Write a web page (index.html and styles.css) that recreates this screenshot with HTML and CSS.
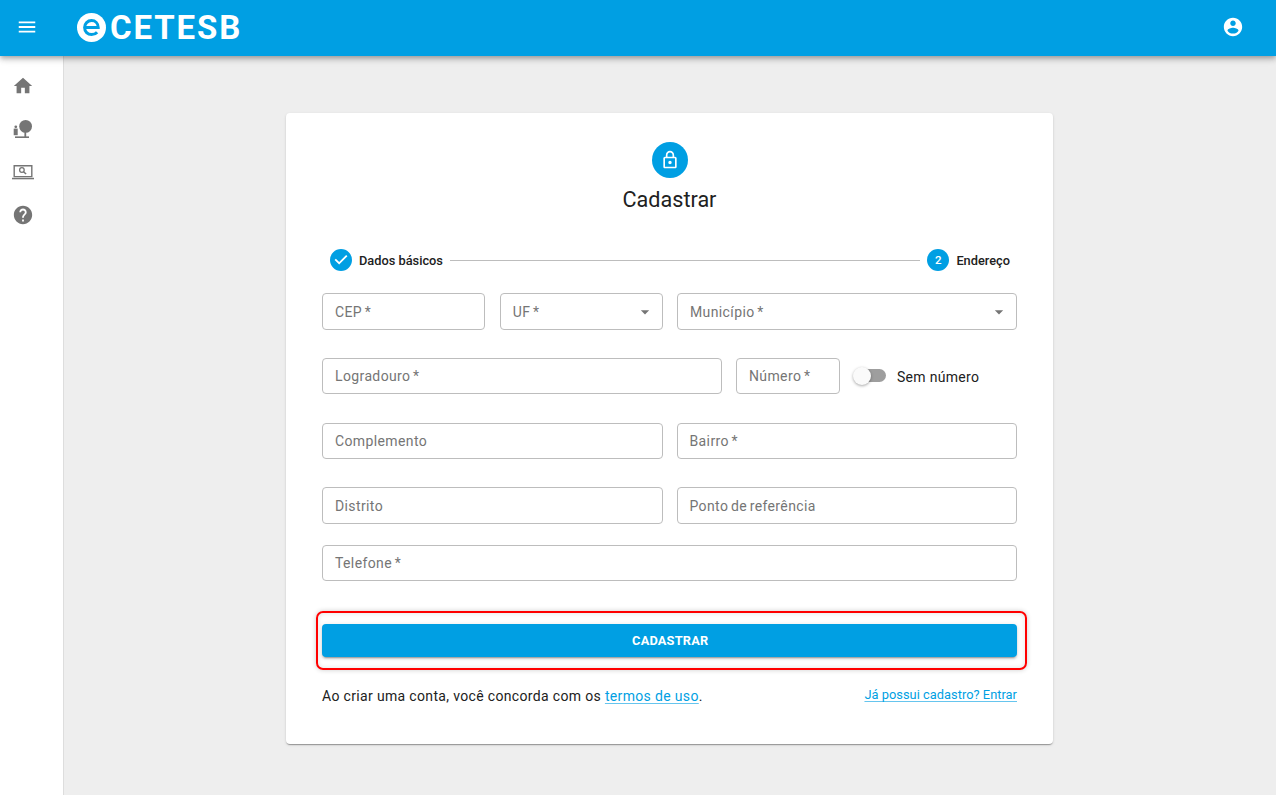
FILE: index.html
```html
<!DOCTYPE html>
<html lang="pt-BR">
<head>
<meta charset="utf-8">
<title>CETESB - Cadastrar</title>
<link rel="stylesheet" href="styles.css">
</head>
<body>
<div class="app">
  <header class="topbar">
    <svg class="menu-icon" viewBox="0 0 24 24"><path d="M3 18h18v-2H3v2zm0-5h18v-2H3v2zm0-7v2h18V6H3z"/></svg>
    <div class="logo">
      <svg class="logo-mark" viewBox="0 0 29 29"><circle cx="14.5" cy="14.5" r="14.5" fill="#fff"/><path d="M7.6 14.6h13.6c0-4.2-2.9-7-6.7-7-3.9 0-6.9 3-6.9 7s3 7 7 7c2.3 0 4.2-.9 5.5-2.4" fill="none" stroke="#009fe3" stroke-width="3"/></svg>
      <span class="logo-text">CETESB</span>
    </div>
    <svg class="account-icon" viewBox="0 0 24 24"><path d="M12 2C6.48 2 2 6.48 2 12s4.48 10 10 10 10-4.48 10-10S17.52 2 12 2zm0 3c1.66 0 3 1.34 3 3s-1.34 3-3 3-3-1.34-3-3 1.34-3 3-3zm0 14.2c-2.5 0-4.71-1.28-6-3.22.03-1.99 4-3.08 6-3.08 1.99 0 5.97 1.09 6 3.08-1.29 1.94-3.5 3.22-6 3.22z"/></svg>
  </header>
  <div class="body">
    <nav class="sidebar">
      <div class="nav-item"><svg class="nav-icon" viewBox="0 0 24 24"><path d="M10 20v-6h4v6h5v-8h3L12 3 2 12h3v8z"/></svg></div>
      <div class="nav-item"><svg class="nav-icon" viewBox="0 0 22 22"><circle cx="13.6" cy="8.4" r="6.4"/><rect x="12.4" y="13" width="1.8" height="6"/><rect x="3" y="18.4" width="14" height="1.6"/><circle cx="3.8" cy="8.8" r="1.4"/><rect x="1.7" y="10.6" width="4" height="6.6"/></svg></div>
      <div class="nav-item"><svg class="nav-icon" viewBox="0 0 22 22"><path d="M1.5 4h19v12.300h-19zM2.900 5.400v9.500h16.200V5.400z" fill-rule="evenodd"/><rect x="0" y="16.800" width="22" height="1.500"/><circle cx="9.900" cy="9" r="2.300" fill="none" stroke="#757575" stroke-width="1.300"/><path d="M11.500 10.700l2.600 2.300" fill="none" stroke="#757575" stroke-width="1.500"/></svg></div>
      <div class="nav-item"><svg class="nav-icon" viewBox="0 0 24 24"><path d="M12 2C6.48 2 2 6.48 2 12s4.480 10 10 10 10-4.480 10-10S17.520 2 12 2zm1 17h-2v-2h2v2zm2.070-7.750l-.9.920C13.450 12.900 13 13.500 13 15h-2v-.5c0-1.100.450-2.100 1.170-2.830l1.240-1.260c.370-.360.590-.860.590-1.410 0-1.100-.9-2-2-2s-2 .9-2 2H8c0-2.210 1.790-4 4-4s4 1.790 4 4c0 .880-.360 1.680-.930 2.250z"/></svg></div>
    </nav>
    <main class="main">
      <section class="card">
        <div class="avatar">
          <svg class="lock-icon" viewBox="0 0 24 24"><path d="M18 8h-1V6c0-2.760-2.240-5-5-5S7 3.240 7 6v2H6c-1.100 0-2 .9-2 2v10c0 1.100.9 2 2 2h12c1.100 0 2-.9 2-2V10c0-1.100-.9-2-2-2zM9 6c0-1.660 1.340-3 3-3s3 1.340 3 3v2H9V6zm9 14H6V10h12v10zm-6-3c1.100 0 2-.9 2-2s-.9-2-2-2-2 .9-2 2 .9 2 2 2z"/></svg>
        </div>
        <h1 class="title">Cadastrar</h1>
        <div class="stepper">
          <svg class="step-icon" viewBox="0 0 24 24"><path d="M12 0a12 12 0 1 0 0 24 12 12 0 0 0 0-24zm-2 17l-5-5 1.400-1.400 3.600 3.600 7.600-7.600L19 8l-9 9z"/></svg>
          <span class="step-label">Dados básicos</span>
          <span class="step-line"></span>
          <span class="step-number">2</span>
          <span class="step-label">Endereço</span>
        </div>
        <div class="row row-first">
          <div class="field w-third">CEP *</div>
          <div class="field w-third select">UF *<svg class="arrow" viewBox="0 0 24 24"><path d="M7 10l5 5 5-5z"/></svg></div>
          <div class="field w-half select">Município *<svg class="arrow" viewBox="0 0 24 24"><path d="M7 10l5 5 5-5z"/></svg></div>
        </div>
        <div class="row">
          <div class="field w-street">Logradouro *</div>
          <div class="field w-number">Número *</div>
          <div class="switch"><span class="switch-track"></span><span class="switch-label">Sem número</span></div>
        </div>
        <div class="row row-third">
          <div class="field w-half">Complemento</div>
          <div class="field w-half">Bairro *</div>
        </div>
        <div class="row row-fourth">
          <div class="field w-half">Distrito</div>
          <div class="field w-half">Ponto de referência</div>
        </div>
        <div class="row row-phone">
          <div class="field w-full">Telefone *</div>
        </div>
        <div class="submit-wrap">
          <button class="submit" type="button">CADASTRAR</button>
          <span class="highlight"></span>
        </div>
        <div class="card-footer">
          <p class="terms">Ao criar uma conta, você concorda com os <a class="link" href="#">termos de uso</a>.</p>
          <a class="link login" href="#">Já possui cadastro? Entrar</a>
        </div>
      </section>
    </main>
  </div>
</div>
</body>
</html>
```
FILE: styles.css
```css
* { box-sizing: border-box; }
html, body { margin: 0; height: 100%; }
body { font-family: Roboto, "Liberation Sans", sans-serif; color: #212121; background: #eee; overflow: hidden; }
.app { display: flex; flex-direction: column; height: 100vh; }

.topbar { position: relative; z-index: 2; flex: none; height: 56px; background: #009fe3; display: flex; align-items: center; padding: 0 32px 2px 16px; box-shadow: 0 2px 4px -1px rgba(0,0,0,.2), 0 4px 5px rgba(0,0,0,.14), 0 1px 10px rgba(0,0,0,.12); }
.menu-icon { width: 22px; height: 22px; fill: #fff; flex: none; }
.logo { display: flex; align-items: center; margin-left: 39px; color: #fff; }
.logo-mark { width: 29px; height: 29px; flex: none; }
.logo-text { font-size: 33px; font-weight: 700; line-height: 29px; margin-left: 4px; letter-spacing: 1.9px; }
.account-icon { width: 22px; height: 22px; fill: #fff; margin-left: auto; flex: none; }

.body { flex: 1; display: flex; min-height: 0; }
.sidebar { flex: none; width: 64px; background: #fff; border-right: 1px solid #ddd; padding: 8.5px 17px 0 0; }
.nav-item { height: 43px; display: flex; align-items: center; justify-content: center; }
.nav-icon { width: 22px; height: 22px; fill: #757575; }

.main { flex: 1; display: flex; justify-content: center; align-items: flex-start; padding: 57px 1px 0 0; }
.card { width: 767px; height: 631px; background: #fff; border-radius: 4px; padding: 29px 36px 0; box-shadow: 0 2px 1px -1px rgba(0,0,0,.2), 0 1px 1px rgba(0,0,0,.14), 0 1px 3px rgba(0,0,0,.12); }
.avatar { width: 36px; height: 36px; margin: 0 auto; border-radius: 50%; background: #009fe3; display: flex; align-items: center; justify-content: center; }
.lock-icon { width: 20px; height: 20px; fill: #fff; }
.title { margin: 7px 0 0; font-size: 21.6px; font-weight: 400; line-height: 30px; text-align: center; color: #212121; }

.stepper { display: flex; align-items: center; height: 22px; margin-top: 34px; padding: 0 7px 0 8px; }
.step-icon { width: 22px; height: 22px; fill: #009fe3; flex: none; }
.step-number { width: 22px; height: 22px; flex: none; border-radius: 50%; background: #009fe3; color: #fff; font-size: 11.5px; font-weight: 500; line-height: 22px; text-align: center; }
.step-label { margin-left: 7px; padding-top: 1px; font-size: 12.8px; font-weight: 500; line-height: 22px; color: #212121; white-space: nowrap; }
.step-line { flex: 1; height: 1px; background: #bdbdbd; margin: 0 7px; }

.row { display: flex; gap: 14px; margin-top: 28px; align-items: center; }
.row-first { margin-top: 22.4px; gap: 14.5px; }
.row-third { margin-top: 28.5px; }
.row-fourth { margin-top: 27.9px; }
.row-phone { margin-top: 21.1px; }
.field { position: relative; height: 36.5px; border: 1px solid #bdbdbd; border-radius: 4px; padding: 0 12px; display: flex; align-items: center; font-size: 14px; letter-spacing: .38px; word-spacing: -1.2px; color: #757575; flex: none; }
.w-third { width: 163.25px; }
.w-half { width: 340.5px; }
.row-first .w-half { width: 340px; margin-left: -.5px; }
.w-street { width: 400px; }
.w-number { width: 104px; }
.w-full { width: 100%; }
.arrow { position: absolute; right: 7px; top: 50%; width: 20px; height: 20px; margin-top: -10px; fill: #757575; }

.switch { display: flex; align-items: center; margin-left: 8px; height: 36.5px; padding-top: 2px; }
.switch-track { position: relative; width: 24px; height: 13px; border-radius: 7px; background: #9e9e9e; margin-top: -3px; }
.switch-track::before { content: ""; position: absolute; left: -9px; top: -2.5px; width: 18px; height: 18px; border-radius: 50%; background: #fafafa; box-shadow: 0 1px 3px rgba(0,0,0,.35); }
.switch-label { margin-left: 11px; font-size: 14px; letter-spacing: .3px; color: #212121; }

.submit-wrap { position: relative; margin-top: 43px; }
.submit { display: block; width: 100%; height: 33px; border: 0; border-radius: 4px; background: #009fe3; color: #fff; font: 700 12.8px Roboto, "Liberation Sans", sans-serif; letter-spacing: .2px; padding: 0 0 0 1.5px; box-shadow: 0 3px 1px -2px rgba(0,0,0,.2), 0 2px 2px rgba(0,0,0,.14), 0 1px 5px rgba(0,0,0,.12); }
.highlight { position: absolute; left: -6px; right: -9.5px; top: -13.5px; bottom: -12.5px; border: 2px solid #f00; border-radius: 7px; box-shadow: 0 0 5px rgba(0,0,0,.2), inset 0 0 5px rgba(0,0,0,.12); pointer-events: none; }

.card-footer { display: flex; justify-content: space-between; align-items: flex-start; margin-top: 28px; }
.terms { margin: 0; font-size: 14px; line-height: 22px; letter-spacing: .34px; color: #212121; }
.link { color: #009fe3; text-decoration-color: #66c5ee; text-decoration-line: underline; text-underline-offset: 2px; }
.login { font-size: 12.8px; line-height: 20px; letter-spacing: .04px; }
```
